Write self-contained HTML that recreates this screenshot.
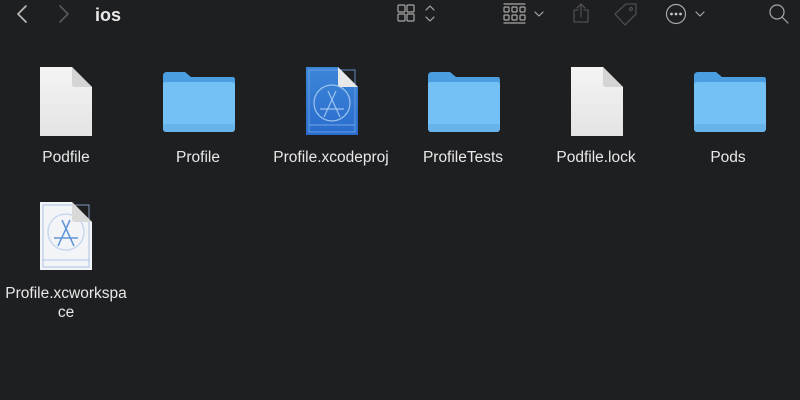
<!DOCTYPE html><html><head><style>
body{margin:0;width:800px;height:400px;background:#1e1f21;overflow:hidden;font-family:"Liberation Sans",sans-serif;position:relative}
.a{position:absolute}
.lbl{position:absolute;color:#e8e8e8;font-size:15.5px;text-align:center;width:140px;line-height:19px}
</style></head><body>
<svg class="a" style="left:0;top:0" width="800" height="32">
<g fill="none" stroke-linecap="round" stroke-linejoin="round" stroke-width="1.6">
<path d="M26 6 L18 14 L26 22" stroke="#bdbdbd"/>
<path d="M60 6 L68 14 L60 22" stroke="#5a5a5a"/>
<g stroke="#a8a8a8" stroke-width="1.2">
<rect x="398" y="5" width="7" height="7" rx="1"/><rect x="407" y="5" width="7" height="7" rx="1"/>
<rect x="398" y="14" width="7" height="7" rx="1"/><rect x="407" y="14" width="7" height="7" rx="1"/>
<path d="M426 10 L430 6 L434 10 M426 17 L430 21 L434 17"/>
<path d="M504 4 H525 M504 23 H525"/>
<rect x="504" y="7" width="5" height="5" rx="1"/><rect x="512" y="7" width="5" height="5" rx="1"/><rect x="520" y="7" width="5" height="5" rx="1"/>
<rect x="504" y="15" width="5" height="5" rx="1"/><rect x="512" y="15" width="5" height="5" rx="1"/><rect x="520" y="15" width="5" height="5" rx="1"/>
<path d="M535 12 L539 16 L543 12"/>
<circle cx="676" cy="14" r="9.5"/>
<path d="M696 12 L700 16 L704 12"/>
<circle cx="777" cy="12" r="7"/><path d="M782 17 L788 23"/>
</g>
<g stroke="#4e4e4e" stroke-width="1.3">
<path d="M574 10 V22 H588 V10 H584 M578 10 H574 M581 17 V4 M577 8 L581 4 L585 8"/>
<path d="M626 4 H636 V14 L625 25 L615 14 Z"/><circle cx="631" cy="9" r="1.5"/>
</g>
</g>
<g fill="#c8c8c8"><circle cx="671.5" cy="14" r="1.4"/><circle cx="676" cy="14" r="1.4"/><circle cx="680.5" cy="14" r="1.4"/></g>
<text x="95" y="21" fill="#e8e8e8" font-size="18" font-weight="bold" font-family="Liberation Sans">ios</text>
</svg>
<svg class="a" style="left:0;top:0" width="800" height="400">
<defs>
<linearGradient id="pg" x1="0" y1="0" x2="0" y2="1"><stop offset="0" stop-color="#f4f4f4"/><stop offset="1" stop-color="#e4e4e4"/></linearGradient>
<linearGradient id="bg" x1="0" y1="0" x2="0" y2="1"><stop offset="0" stop-color="#3d86d8"/><stop offset="1" stop-color="#2a6ccd"/></linearGradient>
<g id="doc"><path d="M0 0 H32 L52 20 V69 H0 Z" fill="url(#pg)"/><path d="M32 0 V17 Q32 20 35 20 H52 Z" fill="#d4d4d4"/></g>
<g id="fold"><path d="M0 4 Q0 0 4 0 H22 L28 5 H70 Q72 5 72 8 V56 Q72 60 68 60 H4 Q0 60 0 56 Z" fill="#4b9ee0"/><path d="M0 12 Q0 10 3 10 H69 Q72 10 72 13 V56 Q72 60 68 60 H4 Q0 60 0 56 Z" fill="#74c1f6"/><rect x="0" y="52" width="72" height="8" rx="3" fill="#68b3ea"/></g>
<g id="A" fill="none" stroke="#9cc4ee" stroke-width="1.2"><circle cx="26" cy="36" r="18"/><path d="M18 50 L30 24 M34 50 L22 24 M14 42 H38"/></g>
</defs>
<use href="#doc" x="40" y="67"/>
<use href="#fold" x="163" y="72"/>
<g transform="translate(306,67)"><path d="M0 0 H32 L52 20 V68 H0 Z" fill="url(#bg)"/><rect x="3" y="3" width="46" height="62" fill="none" stroke="#6ea6e6" stroke-width=".8"/><use href="#A"/><path d="M3 58 H49" stroke="#8ab8ec" stroke-width=".8"/><path d="M32 0 V17 Q32 20 35 20 H52 Z" fill="#e8e8e8"/></g>
<use href="#fold" x="428" y="72"/>
<use href="#doc" x="571" y="67"/>
<use href="#fold" x="694" y="72"/>
<g transform="translate(40,202)"><path d="M0 0 H32 L52 20 V68 H0 Z" fill="#f2f4f8"/><rect x="3" y="3" width="46" height="62" fill="none" stroke="#9cb8e0" stroke-width=".8"/><g transform="translate(0,-6)"><g fill="none" stroke="#5f96d8" stroke-width="1.5"><circle cx="26" cy="36" r="18" stroke="#c8d8ee"/><path d="M18 50 L30 24 M34 50 L22 24 M14 42 H38"/></g></g><path d="M3 58 H49" stroke="#9cb8e0" stroke-width=".8"/><path d="M32 0 V17 Q32 20 35 20 H52 Z" fill="#d8d8d8"/></g>
</svg>
<div class="lbl" style="left:-4px;top:148px">Podfile</div>
<div class="lbl" style="left:128px;top:148px">Profile</div>
<div class="lbl" style="left:261px;top:148px">Profile.xcodeproj</div>
<div class="lbl" style="left:393px;top:148px">ProfileTests</div>
<div class="lbl" style="left:526px;top:148px">Podfile.lock</div>
<div class="lbl" style="left:658px;top:148px">Pods</div>
<div class="lbl" style="left:1px;width:130px;top:284px">Profile.xcworkspa<br>ce</div>
</body></html>
